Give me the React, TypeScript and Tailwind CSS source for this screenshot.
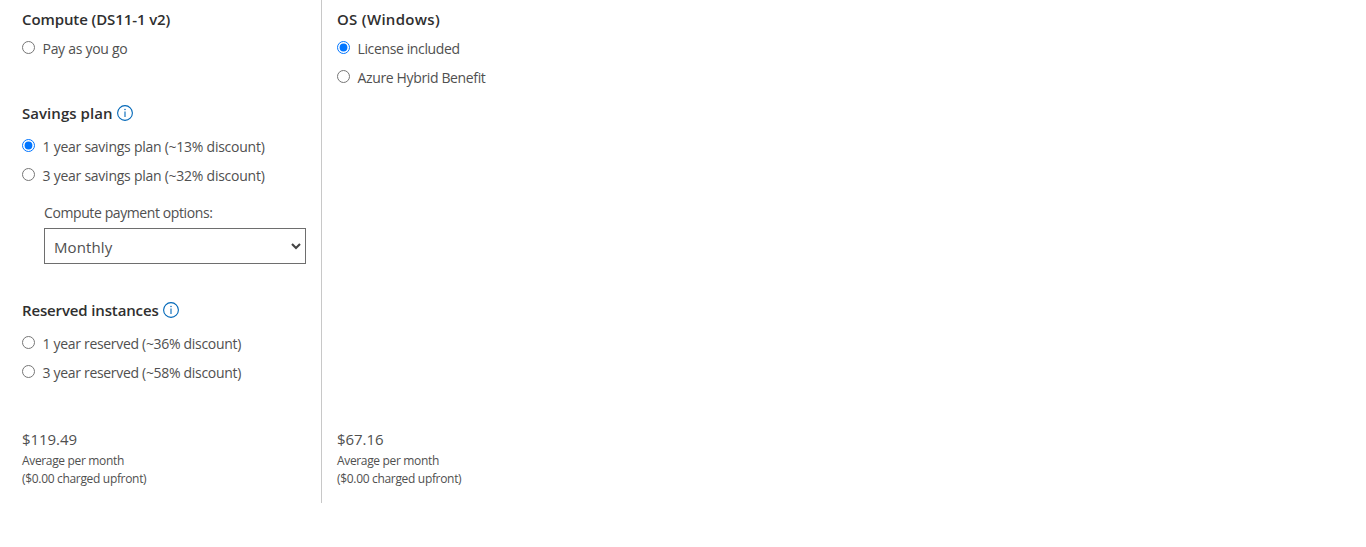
import React, { useState } from 'react';

interface RadioRowProps {
  name: string;
  label: string;
  checked: boolean;
  onSelect: () => void;
  labelClass: string;
}

const RadioRow: React.FC<RadioRowProps> = ({ name, label, checked, onSelect, labelClass }) => {
  return (
    <label className="flex h-[29px] items-start">
      <input
        type="radio"
        name={name}
        checked={checked}
        onChange={onSelect}
        className="mt-[7px] h-[13px] w-[13px] shrink-0"
      />
      <span className={`ml-[7.5px] whitespace-nowrap text-sm leading-[29px] ${labelClass}`}>{label}</span>
    </label>
  );
};

const InfoIcon: React.FC = () => (
  <svg width="16" height="16" viewBox="0 0 16 16" fill="none" className="shrink-0">
    <circle cx="8" cy="8" r="7.4" stroke="#0067b8" strokeWidth="1.1" />
    <path d="M8 6.5V12" stroke="#0067b8" strokeWidth="1.1" />
    <circle cx="8" cy="4.5" r="0.75" fill="#0067b8" />
  </svg>
);

interface PriceProps {
  amount: string;
}

const Price: React.FC<PriceProps> = ({ amount }) => (
  <div className="whitespace-nowrap">
    <div className="text-[15px] leading-[22px] tracking-[-0.05px]">{amount}</div>
    <div className="mt-0.5 text-xs leading-[18px] tracking-[-0.34px]">Average per month</div>
    <div className="text-xs leading-[18px] tracking-[-0.32px]">($0.00 charged upfront)</div>
  </div>
);

const App: React.FC = () => {
  const [compute, setCompute] = useState('savings-1');
  const [os, setOs] = useState('license');

  return (
    <main className="h-[547px] bg-white font-['Open_Sans','Noto_Sans',sans-serif] text-[#505050]">
      <div className="flex h-[503px]">
        <section className="flex w-[322px] flex-col border-r border-[#c8c8c8] pt-[7px] pl-[22px]">
          <h2 className="whitespace-nowrap text-[15px] font-semibold leading-6 tracking-[-0.1px] text-[#2f2f2f]">
            Compute (DS11-1 v2)
          </h2>
          <div className="mt-[3px]">
            <RadioRow
              name="compute"
              label="Pay as you go"
              labelClass="tracking-[-0.29px]"
              checked={compute === 'payg'}
              onSelect={() => setCompute('payg')}
            />
          </div>

          <div className="mt-[38px] flex h-6 items-center gap-1">
            <h2 className="whitespace-nowrap text-[15px] font-semibold leading-6 tracking-[0.05px] text-[#2f2f2f]">
              Savings plan
            </h2>
            <InfoIcon />
          </div>
          <div className="mt-[7px]">
            <RadioRow
              name="compute"
              label="1 year savings plan (~13% discount)"
              labelClass="tracking-[-0.25px]"
              checked={compute === 'savings-1'}
              onSelect={() => setCompute('savings-1')}
            />
            <RadioRow
              name="compute"
              label="3 year savings plan (~32% discount)"
              labelClass="tracking-[-0.25px]"
              checked={compute === 'savings-3'}
              onSelect={() => setCompute('savings-3')}
            />
          </div>
          <div className="mt-[13px] ml-[22px] flex flex-col">
            <label htmlFor="payment" className="whitespace-nowrap text-sm leading-5 tracking-[-0.4px]">
              Compute payment options:
            </label>
            <div className="relative mt-[5px] h-9 w-[262px]">
              <select
                id="payment"
                defaultValue="monthly"
                className="h-9 w-[262px] appearance-none border border-[#6e6e6e] bg-white pt-[2px] pl-[9px] text-[15px] tracking-[0.12px]"
              >
                <option value="monthly">Monthly</option>
              </select>
              <svg
                width="10"
                height="7"
                viewBox="0 0 10 7"
                fill="none"
                className="pointer-events-none absolute top-[15px] right-[5px]"
              >
                <path d="M1 1L5 5L9 1" stroke="#444444" strokeWidth="2.1" />
              </svg>
            </div>
          </div>

          <div className="mt-[34px] flex h-6 items-center gap-1">
            <h2 className="whitespace-nowrap text-[15px] font-semibold leading-6 tracking-[-0.14px] text-[#2f2f2f]">
              Reserved instances
            </h2>
            <InfoIcon />
          </div>
          <div className="mt-[7px]">
            <RadioRow
              name="compute"
              label="1 year reserved (~36% discount)"
              labelClass="tracking-[-0.31px]"
              checked={compute === 'reserved-1'}
              onSelect={() => setCompute('reserved-1')}
            />
            <RadioRow
              name="compute"
              label="3 year reserved (~58% discount)"
              labelClass="tracking-[-0.31px]"
              checked={compute === 'reserved-3'}
              onSelect={() => setCompute('reserved-3')}
            />
          </div>

          <div className="mt-[41px]">
            <Price amount="$119.49" />
          </div>
        </section>

        <section className="flex flex-col justify-between pt-[7px] pb-[15px] pl-[15px]">
          <div>
            <h2 className="whitespace-nowrap text-[15px] font-semibold leading-6 tracking-[0.3px] text-[#2f2f2f]">
              OS (Windows)
            </h2>
            <div className="mt-[3px]">
              <RadioRow
                name="os"
                label="License included"
                labelClass="tracking-[-0.37px]"
                checked={os === 'license'}
                onSelect={() => setOs('license')}
              />
              <RadioRow
                name="os"
                label="Azure Hybrid Benefit"
                labelClass="tracking-[-0.36px]"
                checked={os === 'hybrid'}
                onSelect={() => setOs('hybrid')}
              />
            </div>
          </div>
          <Price amount="$67.16" />
        </section>
      </div>
    </main>
  );
};

export default App;
